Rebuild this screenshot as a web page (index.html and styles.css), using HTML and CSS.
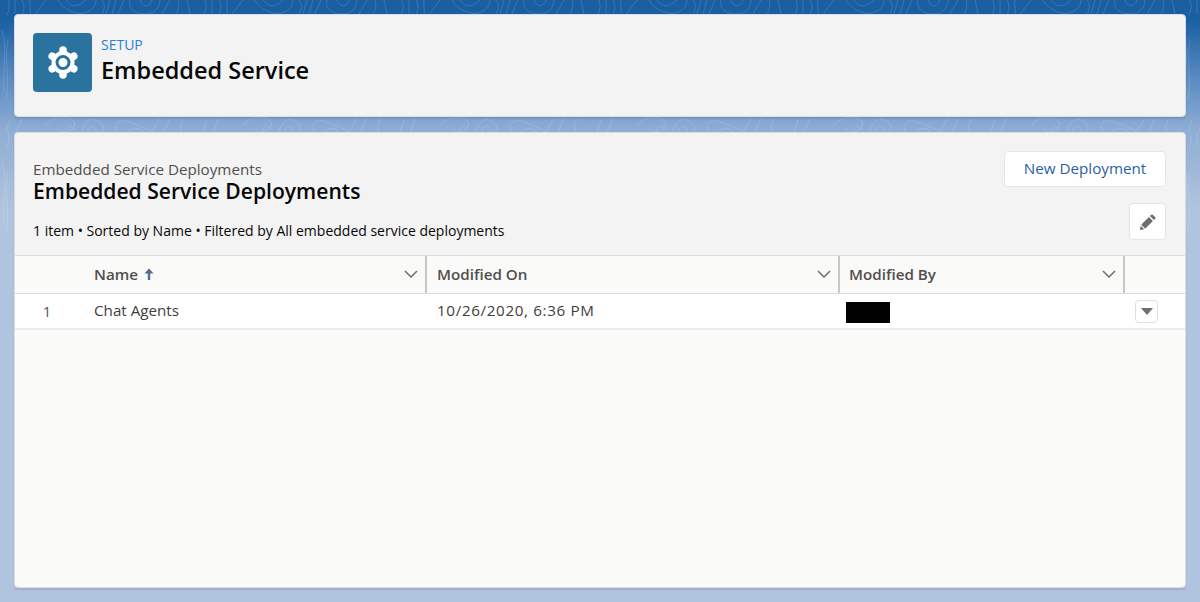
FILE: index.html
```html
<!DOCTYPE html>
<html lang="en">
<head>
<meta charset="utf-8">
<title>Embedded Service</title>
<link rel="stylesheet" href="styles.css">
</head>
<body>
<svg class="backdrop" width="1200" height="240" aria-hidden="true">
  <defs>
    <pattern id="topo" width="197" height="132" patternUnits="userSpaceOnUse">
      <g fill="none" stroke="#fff" stroke-width="1">
        <path d="M8 0C10 6 9 10 7 15M15 0V14M22 0C25 5 24 10 22 15M30 0C29 6 31 10 30 15M46 0C42 5 38 10 35 15"/>
        <path d="M58 0C62 8 74 15 84 13C92 11 96 6 96 0M66 0C70 6 76 9 86 0M102 0C106 5 104 10 102 15M110 0L106 14M116 0L112 14M124 0L118 14"/>
        <path d="M130 0C128 6 132 14 146 14C156 14 160 6 160 0M140 0C142 7 150 8 152 0M170 0L162 14M178 0C180 6 178 10 176 15M187 0L190 14"/>
        <path d="M6 132L10 120M16 132L22 118M46 126C52 116 70 114 74 122C78 130 62 136 58 128M66 132C64 126 72 124 74 130M82 132C84 122 90 118 96 120C106 124 104 132 100 132"/>
        <path d="M92 126A4 5 0 1 0 92.100 126M118 132C112 124 120 118 130 122C140 126 146 128 152 132M128 132C132 126 140 128 142 132M160 118L152 132M170 118L164 132M184 118C180 124 180 128 182 132"/>
        <path d="M2 30C8 50 2 70 4 92M8 40C4 60 10 76 6 100"/>
      </g>
    </pattern>
  </defs>
  <rect class="backdrop-lines" width="1200" height="240" fill="url(#topo)"/>
</svg>
<main class="page">
  <header class="card head">
    <div class="app-icon">
      <svg width="32" height="33" viewBox="0 0 32 33" aria-hidden="true">
        <g stroke="#fff" stroke-width="7.500" stroke-linecap="round">
          <line x1="16" y1="4" x2="16" y2="29"/>
          <line x1="5.200" y1="10.250" x2="26.800" y2="22.750"/>
          <line x1="26.800" y1="10.250" x2="5.200" y2="22.750"/>
        </g>
        <circle cx="16" cy="16.500" r="11.500" fill="#fff"/>
        <circle cx="16" cy="16.500" r="6" fill="none" stroke="#2a739e" stroke-width="3"/>
      </svg>
    </div>
    <div class="head-text">
      <div class="eyebrow">SETUP</div>
      <h1 class="head-title">Embedded Service</h1>
    </div>
  </header>
  <section class="card list">
    <div class="list-top">
      <div class="list-info">
        <div class="crumb">Embedded Service Deployments</div>
        <h2 class="list-title">Embedded Service Deployments</h2>
        <p class="meta">1 item • Sorted by Name • Filtered by All embedded service deployments</p>
      </div>
      <div class="list-actions">
        <button class="btn new-btn" type="button">New Deployment</button>
        <button class="btn icon-btn" type="button" aria-label="Edit">
          <svg width="16" height="16" viewBox="0 0 16 16" aria-hidden="true">
            <path fill="#706e6b" d="M11.300.700C11.700.300 12.300.300 12.700.700L15.300 3.300C15.700 3.700 15.700 4.300 15.300 4.700L13.900 6.100L9.900 2.100ZM8.900 3.100L12.900 7.100L5.200 14.800L1.200 10.800ZM.700 11.800L4.200 15.300L.400 16C.200 16 0 15.800 0 15.600Z"/>
          </svg>
        </button>
      </div>
    </div>
    <div class="thead">
      <div class="th th-num"></div>
      <div class="th th-name"><span>Name <span class="arrow">
        <svg width="10" height="12" viewBox="0 0 10 12" aria-hidden="true"><path fill="#54698d" d="M5 .500L9.500 5.500H6.200V12H3.800V5.500H.500Z"/></svg></span></span>
        <svg class="chev" width="14" height="8" viewBox="0 0 14 8" aria-hidden="true"><path d="M1 1L7 7L13 1" fill="none" stroke="#706e6b" stroke-width="1.500"/></svg></div>
      <div class="th th-on"><span>Modified On</span>
        <svg class="chev" width="14" height="8" viewBox="0 0 14 8" aria-hidden="true"><path d="M1 1L7 7L13 1" fill="none" stroke="#706e6b" stroke-width="1.500"/></svg></div>
      <div class="th th-by"><span>Modified By</span>
        <svg class="chev" width="14" height="8" viewBox="0 0 14 8" aria-hidden="true"><path d="M1 1L7 7L13 1" fill="none" stroke="#706e6b" stroke-width="1.500"/></svg></div>
      <div class="th th-end"></div>
    </div>
    <div class="tr">
      <div class="td td-num">1</div>
      <div class="td td-name">Chat Agents</div>
      <div class="td td-on">10/26/2020, 6:36 PM</div>
      <div class="td td-by"><span class="redact"></span></div>
      <div class="td td-end">
        <button class="row-btn" type="button" aria-label="Show actions">
          <svg width="12" height="7" viewBox="0 0 12 7" aria-hidden="true"><path fill="#706e6b" d="M0 0H12L6 7Z"/></svg>
        </button>
      </div>
    </div>
    <div class="list-empty"></div>
  </section>
</main>
</body>
</html>
```
FILE: styles.css
```css
* { box-sizing: border-box; }
html, body { height: 100%; }
body {
  margin: 0;
  height: 602px;
  overflow: hidden;
  position: relative;
  font-family: "Open Sans", "Noto Sans", sans-serif;
  color: #080707;
  background: linear-gradient(180deg, #1b5fa3 0, #1b5fa3 20px, #5c8cc2 80px, #8fadd4 130px, #b0c4df 210px, #b0c4df 100%);
}
.backdrop { position: absolute; left: 0; top: 0; display: block; }
.backdrop-lines { opacity: .14; }
.page {
  position: relative;
  display: flex;
  flex-direction: column;
  gap: 15px;
  height: 602px;
  padding: 14px;
}
.card {
  border-radius: 4px;
  border: 1px solid #d8dde6;
  box-shadow: 0 2px 2px rgba(0,0,0,.1);
}
.head {
  height: 103px;
  flex: none;
  background: #f3f3f3;
  display: flex;
  align-items: flex-start;
  padding: 18px 18px 0;
  gap: 9px;
}
.app-icon {
  width: 59px;
  height: 59px;
  border-radius: 4px;
  background: #2a739e;
  display: flex;
  align-items: center;
  justify-content: center;
}
.eyebrow { font-size: 14px; line-height: 18px; margin-top: 3px; color: #2b7fd8; }
.head-title { margin: 0; font-size: 23.500px; line-height: 33px; font-weight: 600; color: #080707; }
.list {
  flex: 1;
  background: #fafaf9;
  display: flex;
  flex-direction: column;
  overflow: hidden;
}
.list-top {
  flex: none;
  height: 123px;
  background: #f3f3f3;
  display: flex;
  justify-content: space-between;
  padding: 18px 19px 0 18px;
  border-bottom: 1px solid #dddbda;
}
.crumb { margin-top: 9px; font-size: 15.200px; line-height: 19px; color: #514f4d; }
.list-title { margin: 0; font-size: 21.100px; line-height: 23px; font-weight: 600; }
.meta { margin: 20px 0 0; font-size: 14px; line-height: 18px; color: #080707; }
.list-actions { display: flex; flex-direction: column; align-items: flex-end; gap: 16px; }
.btn {
  background: #fff;
  border: 1px solid #e5e5e4;
  border-radius: 4px;
  font-family: inherit;
  padding: 0;
  display: flex;
  align-items: center;
  justify-content: center;
}
.new-btn { width: 162px; height: 36px; padding-bottom: 2px; font-size: 15.200px; color: #2a5ea8; }
.icon-btn { width: 37px; height: 37px; }
.thead {
  flex: none;
  height: 38px;
  display: flex;
  background: #fafaf9;
  border-bottom: 1px solid #dddbda;
}
.th {
  display: flex;
  align-items: center;
  justify-content: space-between;
  font-size: 15.200px;
  font-weight: 600;
  color: #514f4d;
  padding: 0 7px 1px 10px;
  border-right: 2px solid #c9c7c5;
  height: 37px;
}
.th-num { width: 69px; border-right: 0; padding: 0; }
.th-name { width: 343px; }
.th-on { width: 413px; }
.th-by { width: 285px; padding-left: 9px; }
.th-end { flex: 1; border-right: 0; }
.arrow { margin-left: 2px; }
.tr {
  flex: none;
  height: 36px;
  display: flex;
  align-items: center;
  background: #fff;
  border-bottom: 2px solid #ecebea;
  font-size: 15.200px;
  color: #3e3e3c;
}
.td { padding: 0 10px; }
.td-num { width: 69px; padding: 0 0 0 28px; font-size: 14px; color: #514f4d; }
.td-name { width: 343px; padding-bottom: 2px; }
.td-on { width: 413px; padding-bottom: 2px; letter-spacing: .650px; }
.td-by { width: 285px; padding-left: 6px; padding-top: 2px; }
.td-end { flex: 1; padding: 0 0 0 10px; }
.redact { display: block; width: 44px; height: 21px; background: #000; }
.row-btn {
  width: 23px;
  height: 23px;
  background: #fff;
  border: 1px solid #e0dfde;
  border-radius: 4px;
  padding: 0;
  display: flex;
  align-items: center;
  justify-content: center;
}
.list-empty { flex: 1; }
```
